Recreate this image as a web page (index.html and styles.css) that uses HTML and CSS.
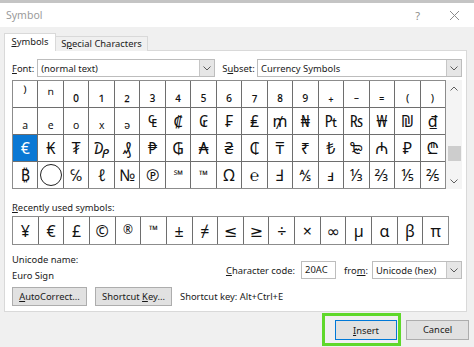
FILE: index.html
```html
<!DOCTYPE html>
<html lang="en">
<head>
    <meta charset="UTF-8">
    <title>Symbol</title>
    <link rel="stylesheet" href="styles.css">
</head>
<body>
    <div class="window">
        <div class="titlebar">
            <span class="title">Symbol</span>
            <span class="help">?</span>
            <span class="close">
                <svg width="11" height="11" viewBox="0 0 11 11"><path d="M1 1 L10 10 M10 1 L1 10" stroke="#8c8c8c" stroke-width="1" fill="none"/></svg>
            </span>
        </div>

        <div class="body">
            <div class="tabs">
                <div class="tab active"><u>S</u>ymbols</div>
                <div class="tab">S<u>p</u>ecial Characters</div>
            </div>

            <div class="panel">
                <div class="font-row">
                    <label class="lbl"><u>F</u>ont:</label>
                    <div class="select font-select">
                        <span class="value">(normal text)</span>
                        <span class="arrow"><svg width="8" height="5" viewBox="0 0 8 5"><path d="M0.5 0.5 L4 4 L7.5 0.5" stroke="#5a5a5a" fill="none"/></svg></span>
                    </div>
                    <label class="lbl subset-lbl">S<u>u</u>bset:</label>
                    <div class="select subset-select">
                        <span class="value">Currency Symbols</span>
                        <span class="arrow"><svg width="8" height="5" viewBox="0 0 8 5"><path d="M0.5 0.5 L4 4 L7.5 0.5" stroke="#5a5a5a" fill="none"/></svg></span>
                    </div>
                </div>

                <div class="chars-box">
                    <div class="chars">
                        <span>⁾</span><span>ⁿ</span><span>₀</span><span>₁</span><span>₂</span><span>₃</span><span>₄</span><span>₅</span><span>₆</span><span>₇</span><span>₈</span><span>₉</span><span>₊</span><span>₋</span><span>₌</span><span>₍</span><span>₎</span>
                        <span>ₐ</span><span>ₑ</span><span>ₒ</span><span>ₓ</span><span>ₔ</span><span>₠</span><span>₡</span><span>₢</span><span>₣</span><span>₤</span><span>₥</span><span>₦</span><span>₧</span><span>₨</span><span>₩</span><span>₪</span><span>₫</span>
                        <span class="selected">€</span><span>₭</span><span>₮</span><span>₯</span><span>₰</span><span>₱</span><span>₲</span><span>₳</span><span>₴</span><span>₵</span><span>₸</span><span>₹</span><span>₺</span><span>₻</span><span>₼</span><span>₽</span><span>₾</span>
                        <span>₿</span><span><i class="ring"></i></span><span>℅</span><span>ℓ</span><span>№</span><span>℗</span><span class="small">℠</span><span class="small">™</span><span>Ω</span><span>℮</span><span>Ⅎ</span><span>⅍</span><span>ⅎ</span><span>⅓</span><span>⅔</span><span>⅕</span><span>⅖</span>
                    </div>
                    <div class="scrollbar">
                        <svg width="8" height="5" viewBox="0 0 8 5"><path d="M0.5 4.5 L4 1 L7.5 4.5" stroke="#606060" fill="none"/></svg>
                        <div class="thumb"></div>
                        <svg width="8" height="5" viewBox="0 0 8 5"><path d="M0.5 0.5 L4 4 L7.5 0.5" stroke="#606060" fill="none"/></svg>
                    </div>
                </div>

                <div class="recent-lbl"><u>R</u>ecently used symbols:</div>
                <div class="recent">
                    <span>¥</span><span>€</span><span>£</span><span>©</span><span class="small">®</span><span class="small">™</span><span>±</span><span>≠</span><span>≤</span><span>≥</span><span>÷</span><span>×</span><span>∞</span><span>µ</span><span>α</span><span>β</span><span>π</span>
                </div>

                <div class="info">
                    <div class="names">
                        <div>Unicode name:</div>
                        <div>Euro Sign</div>
                    </div>
                    <div class="code-row">
                        <label class="lbl"><u>C</u>haracter code:</label>
                        <div class="input code-input">20AC</div>
                        <label class="lbl from-lbl">fro<u>m</u>:</label>
                        <div class="select from-select">
                            <span class="value">Unicode (hex)</span>
                            <span class="arrow"><svg width="8" height="5" viewBox="0 0 8 5"><path d="M0.5 0.5 L4 4 L7.5 0.5" stroke="#5a5a5a" fill="none"/></svg></span>
                        </div>
                    </div>
                </div>

                <div class="btn-row">
                    <button class="btn auto-btn"><u>A</u>utoCorrect...</button>
                    <button class="btn key-btn">Shortcut <u>K</u>ey...</button>
                    <span class="shortcut">Shortcut key: Alt+Ctrl+E</span>
                </div>
            </div>

            <div class="footer">
                <div class="highlight">
                    <button class="btn insert-btn"><u>I</u>nsert</button>
                </div>
                <button class="btn cancel-btn">Cancel</button>
            </div>
        </div>
    </div>
</body>
</html>
```

FILE: styles.css
```css
* {
    margin: 0;
    padding: 0;
    box-sizing: border-box;
}

body {
    width: 474px;
    height: 347px;
    overflow: hidden;
    background: #f0f0f0;
    font-family: 'Noto Sans', 'DejaVu Sans', sans-serif;
    font-size: 9.4px;
    color: #1a1a1a;
}

.window {
    border-top: 3px solid #c4c4c4;
}

.titlebar {
    height: 24px;
    background: #ffffff;
    display: flex;
    align-items: center;
    padding-left: 6px;
}

.title {
    color: #9a9a9a;
    font-size: 10.5px;
    flex: 1;
}

.help {
    color: #8c8c8c;
    font-size: 11px;
    margin-right: 29px;
}

.close {
    display: flex;
    margin-right: 14px;
}

.body {
    padding-top: 6px;
}

.tabs {
    display: flex;
    align-items: flex-end;
    padding-left: 4px;
    position: relative;
    z-index: 1;
    margin-bottom: -1px;
}

.tab {
    height: 15px;
    line-height: 14px;
    border: 1px solid #d9d9d9;
    border-left: none;
    border-bottom: none;
    background: #f0f0f0;
    width: 92px;
    text-align: center;
}

.tab.active {
    height: 18px;
    line-height: 16px;
    width: 52px;
    background: #ffffff;
    border-left: 1px solid #d9d9d9;
}

.panel {
    margin: 0 7px 0 4px;
    background: #ffffff;
    border: 1px solid #d9d9d9;
    padding: 8px 4px 5px 7px;
}

.font-row {
    display: flex;
    align-items: center;
    height: 18px;
}

.lbl {
    white-space: nowrap;
}

.select {
    height: 18px;
    border: 1px solid #bdbdbd;
    display: flex;
    align-items: center;
    background: #ffffff;
}

.select .value {
    flex: 1;
    padding-left: 3px;
    white-space: nowrap;
}

.select .arrow {
    width: 15px;
    height: 16px;
    background: #e6e6e6;
    border-left: 1px solid #c6c6c6;
    display: flex;
    align-items: center;
    justify-content: center;
}

.font-select {
    width: 178px;
    margin-left: 3px;
}

.subset-lbl {
    margin-left: 7px;
}

.subset-select {
    width: 205px;
    margin-left: auto;
}

.chars-box {
    display: flex;
    margin-top: 3px;
}

.chars,
.recent {
    display: grid;
    grid-template-columns: repeat(17, 1fr);
    gap: 1px;
    background: #6e6e6e;
    border: 1px solid #8c8c8c;
    font-family: 'Noto Sans', 'DejaVu Sans', sans-serif;
    font-size: 16px;
}

.chars {
    width: 434px;
    grid-auto-rows: 26px;
}

.chars span,
.recent span {
    background: #ffffff;
    display: flex;
    align-items: center;
    justify-content: center;
    color: #111111;
    overflow: hidden;
}

.chars span.small,
.recent span.small {
    font-size: 12px;
    align-items: flex-start;
    padding-top: 4px;
}

.chars span.selected {
    background: #0a78d4;
    color: #ffffff;
}

.ring {
    display: block;
    width: 22px;
    height: 22px;
    border: 1px solid #222222;
    border-radius: 50%;
}

.scrollbar {
    width: 16px;
    background: #f4f4f4;
    display: flex;
    flex-direction: column;
    align-items: center;
    padding: 6px 0 5px;
}

.thumb {
    width: 13px;
    height: 15px;
    background: #cdcdcd;
    margin: 55px 0 auto;
}

.recent-lbl {
    margin-top: 11px;
    height: 15px;
    line-height: 15px;
}

.recent {
    margin-top: 1px;
    width: 437px;
    grid-auto-rows: 27px;
}

.info {
    display: flex;
    margin-top: 7px;
}

.names {
    flex: 1;
    line-height: 16px;
}

.code-row {
    display: flex;
    align-items: center;
    padding-top: 9px;
    height: 27px;
}

.input {
    height: 18px;
    border: 1px solid #bdbdbd;
    line-height: 16px;
    padding-left: 3px;
}

.code-input {
    width: 35px;
    margin-left: 6px;
}

.from-lbl {
    margin-left: 8px;
}

.from-select {
    width: 90px;
    margin-left: 4px;
}

.btn-row {
    display: flex;
    align-items: center;
    margin-top: 3px;
}

.btn {
    height: 19px;
    background: #e1e1e1;
    border: 1px solid #adadad;
    font-family: inherit;
    font-size: 9.4px;
    color: #1a1a1a;
}

.auto-btn {
    width: 75px;
}

.key-btn {
    width: 77px;
    margin-left: 8px;
}

.shortcut {
    margin-left: 8px;
}

.footer {
    display: flex;
    justify-content: flex-end;
    align-items: center;
    gap: 5px;
    margin-top: 1px;
    padding-right: 5px;
}

.highlight {
    border: 3px solid #5fd82a;
    padding: 4px 1px 3px 10px;
}

.insert-btn {
    width: 62px;
    height: 20px;
    border-color: #0078d7;
}

.cancel-btn {
    width: 63px;
    height: 20px;
}
```
